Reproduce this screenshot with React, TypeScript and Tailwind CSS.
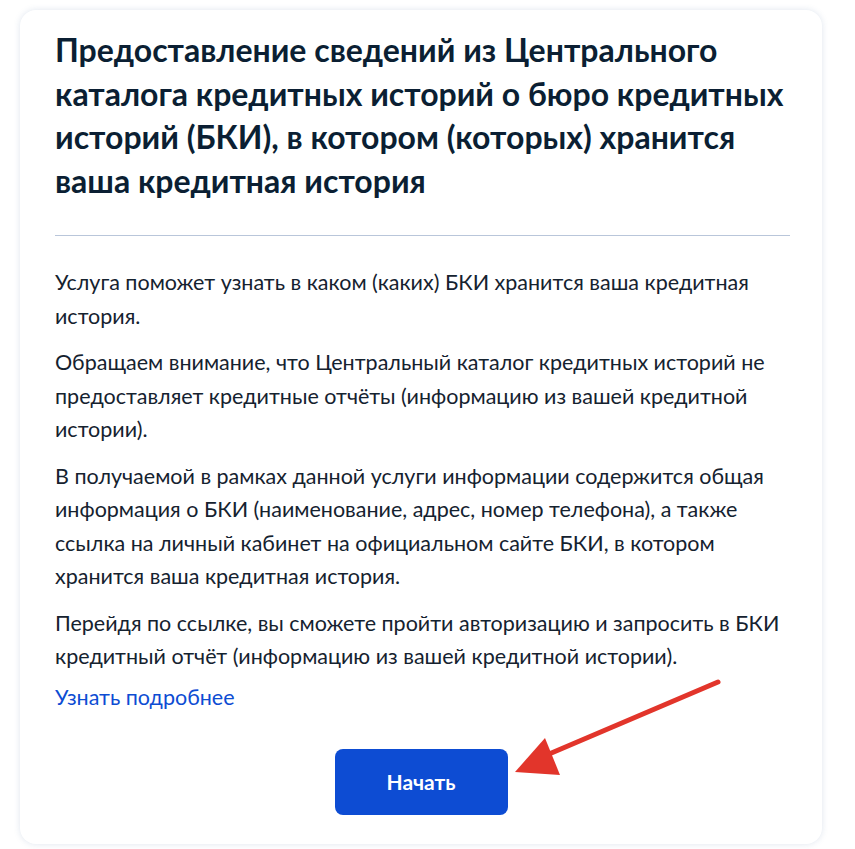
export default function App() {
  return (
    <div
      className="min-h-[849px] bg-white pt-[10px] px-[20px] text-[#0b1f33]"
      style={{ fontFamily: "Lato, 'Noto Sans', sans-serif" }}
    >
      <div className="relative w-[802px] rounded-2xl bg-white px-[35px] pt-[18px] pb-[29px] shadow-[0_0_6px_rgba(80,110,160,0.18)]">
        <h1 className="text-[32px] font-bold leading-[43.5px]">
          Предоставление сведений из Центрального каталога кредитных историй о бюро кредитных историй (БКИ), в котором (которых) хранится ваша кредитная история
        </h1>
        <div className="mt-[33px] h-px w-[735px] bg-[#b9c6da]" />
        <div className="mt-[30px] flex flex-col gap-[13px] text-[21.5px] leading-[33.5px] text-[#15222f]">
          <p>Услуга поможет узнать в каком (каких) БКИ хранится ваша кредитная история.</p>
          <p>
            Обращаем внимание, что Центральный каталог кредитных историй не предоставляет кредитные отчёты (информацию из вашей кредитной истории).
          </p>
          <p>
            В получаемой в рамках данной услуги информации содержится общая информация о БКИ (наименование, адрес, номер телефона), а также ссылка на личный кабинет на официальном сайте БКИ, в котором хранится ваша кредитная история.
          </p>
          <p>
            Перейдя по ссылке, вы сможете пройти авторизацию и запросить в БКИ кредитный отчёт (информацию из вашей кредитной истории).
          </p>
        </div>
        <a href="#" className="mt-[7px] block text-[21.5px] leading-[33px] text-[#0d4cd3]">
          Узнать подробнее
        </a>
        <div className="mt-[35px] flex justify-center">
          <button className="h-[66px] w-[173px] rounded-lg bg-[#0d4cd3] text-[21px] font-bold text-white">
            Начать
          </button>
        </div>

        {/* red annotation arrow pointing at the button */}
        <svg
          className="pointer-events-none absolute left-[450px] top-[640px]"
          width="280"
          height="150"
          viewBox="470 650 280 150"
        >
          <line x1="718" y1="682" x2="535" y2="760" stroke="#e2352b" strokeWidth="5" strokeLinecap="round" />
          <polygon points="515,772 545,738 560,775" fill="#e2352b" />
        </svg>
      </div>
    </div>
  );
}
